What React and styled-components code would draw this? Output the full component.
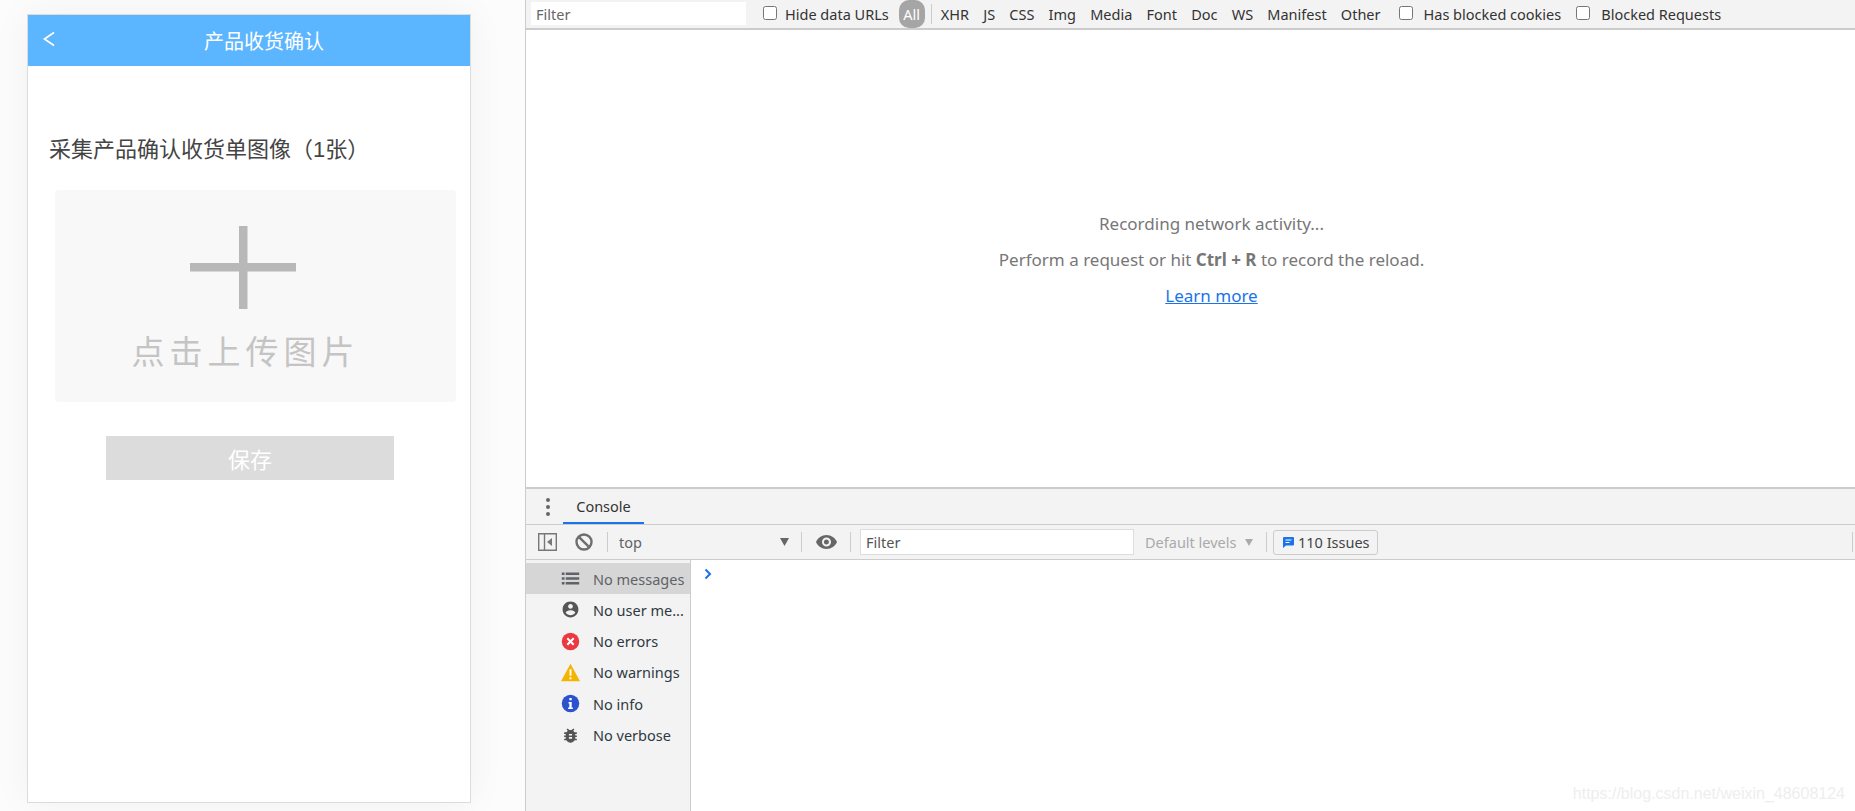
import styled, { createGlobalStyle } from "styled-components"

const GlobalStyle = createGlobalStyle`
  html, body {
    margin: 0;
    height: 100%;
    overflow: hidden;
    background: #fff;
  }
  * {
    box-sizing: border-box;
  }
`

const sans = `"Noto Sans", "Open Sans", "Noto Sans CJK SC", sans-serif`
const cjk = `"Liberation Sans", "Noto Sans CJK SC", sans-serif`

const Container = styled.div`
  height: 100vh;
  width: 100vw;
  display: flex;
  position: relative;
  overflow: hidden;
`

const PhonePane = styled.div`
  width: 525px;
  height: 100%;
  flex: none;
  padding: 14px 0 0 27px;
  background: #fcfcfc;
`

const Phone = styled.div`
  width: 444px;
  height: 789px;
  background: #fff;
  border: 1px solid #dcdcdc;
  box-shadow: 0 0 36px rgba(0, 0, 0, 0.05);
  display: flex;
  flex-direction: column;
  font-family: ${cjk};
`

const PhoneHeader = styled.div`
  height: 51px;
  flex: none;
  padding-left: 30px;
  background: #5cb6ff;
  color: #fff;
  font-size: 20px;
  display: flex;
  align-items: center;
  justify-content: center;
  position: relative;
`

const BackIcon = styled.svg`
  position: absolute;
  left: 15px;
  top: 16px;
  width: 12px;
  height: 16px;
`

const PageTitle = styled.div`
  margin: 69px 0 25px 21px;
  font-size: 22px;
  line-height: 30px;
  color: #444;
  white-space: nowrap;
`

const Upload = styled.div`
  width: 401px;
  height: 212px;
  margin-left: 27px;
  padding: 36px 26px 0 0;
  background: #f8f8f8;
  border-radius: 3px;
  display: flex;
  flex-direction: column;
  align-items: center;
`

const UploadText = styled.div`
  margin: 24px 0 0 6px;
  font-size: 33px;
  line-height: 40px;
  letter-spacing: 5px;
  color: #c4c4c4;
  white-space: nowrap;
`

const SaveButton = styled.div`
  width: 288px;
  height: 44px;
  margin: 34px 0 0 78px;
  background: #dcdcdc;
  color: #fff;
  font-size: 22px;
  display: flex;
  align-items: center;
  justify-content: center;
`

const DevTools = styled.div`
  flex: 1;
  min-width: 0;
  height: 100%;
  border-left: 1px solid #ccc;
  display: flex;
  flex-direction: column;
  font-family: ${sans};
  font-size: 14.5px;
  color: #333;
`

const NetworkBar = styled.div`
  height: 30px;
  flex: none;
  padding-left: 5px;
  background: #f3f3f3;
  border-bottom: 2px solid #ccc;
  display: flex;
  align-items: center;
  white-space: nowrap;
`

const BarFilter = styled.div`
  width: 215px;
  height: 23px;
  margin-top: -1px;
  padding-left: 5px;
  background: #fff;
  color: #666;
  line-height: 25px;
`

const Check = styled.label`
  display: flex;
  align-items: center;
  gap: ${p => p.$gap || 8}px;
  margin-left: ${p => p.$left}px;
`

const CheckBox = styled.input`
  width: 14px;
  height: 14px;
  margin: 0 0 3px;
`

const AllPill = styled.div`
  width: 26px;
  height: 28px;
  margin-left: 10px;
  border-radius: 10px;
  background: #a5a5a5;
  color: #fff;
  display: flex;
  align-items: center;
  justify-content: center;
`

const VRule = styled.div`
  width: 1px;
  height: ${p => p.$h || 20}px;
  flex: none;
  background: #ccc;
  margin-left: ${p => p.$left}px;
`

const Chips = styled.div`
  display: flex;
  gap: 14.2px;
  margin-left: 9px;
`

const Empty = styled.div`
  flex: 1;
  min-height: 0;
  background: #fff;
  display: flex;
  flex-direction: column;
  align-items: center;
  padding: 176px 0 0 42px;
  color: #777;
  font-size: 17px;
  line-height: 36px;
`

const Link = styled.a`
  color: #1a73e8;
  text-decoration: underline;
`

const DrawerTabs = styled.div`
  height: 38px;
  flex: none;
  background: #f3f3f3;
  border-top: 2px solid #ccc;
  border-bottom: 1px solid #ccc;
  display: flex;
  align-items: stretch;
  padding-left: 16px;
`

const Dots = styled.svg`
  width: 12px;
  height: 20px;
  align-self: center;
`

const Tab = styled.div`
  width: 81px;
  margin-left: 9px;
  border-bottom: 2px solid #1a73e8;
  display: flex;
  align-items: center;
  justify-content: center;
`

const ConsoleBar = styled.div`
  height: 35px;
  flex: none;
  background: #f3f3f3;
  border-bottom: 1px solid #ccc;
  display: flex;
  align-items: center;
  padding-left: 12px;
  position: relative;
`

const BarIcon = styled.svg`
  width: ${p => p.$w}px;
  height: ${p => p.$h}px;
  flex: none;
  margin-left: ${p => p.$left || 0}px;
`

const Context = styled.div`
  width: 161px;
  margin-left: 11px;
  color: #5f6368;
`

const ConsoleFilter = styled.div`
  width: 274px;
  height: 26px;
  margin-left: 9px;
  padding-left: 5px;
  background: #fff;
  border: 1px solid #ddd;
  color: #555;
  line-height: 25px;
`

const Levels = styled.div`
  margin-left: 11px;
  width: 93px;
  color: #aaa;
  white-space: nowrap;
`

const IssuesButton = styled.div`
  width: 105px;
  height: 25px;
  margin-left: 6px;
  border: 1px solid #ccc;
  border-radius: 3px;
  display: flex;
  align-items: center;
  gap: 4px;
  padding-left: 9px;
  color: #444;
  white-space: nowrap;
`

const ConsoleBody = styled.div`
  height: 251px;
  flex: none;
  display: flex;
`

const Sidebar = styled.div`
  width: 165px;
  flex: none;
  padding-top: 3px;
  background: #f3f3f3;
  border-right: 1px solid #ccc;
`

const SideRow = styled.div`
  height: ${p => (p.$selected ? 31 : 31.4)}px;
  display: flex;
  align-items: center;
  gap: 13px;
  padding-left: 35px;
  background: ${p => (p.$selected ? "#d6d6d6" : "transparent")};
  color: ${p => (p.$selected ? "#5f6368" : "#303942")};
  white-space: nowrap;
`

const SideIcon = styled.svg`
  width: 19px;
  height: 19px;
  flex: none;
`

const Prompt = styled.svg`
  width: 8px;
  height: 12px;
  margin: 8px 0 0 13px;
`

const Watermark = styled.div`
  position: absolute;
  right: 10px;
  bottom: 8px;
  font-family: "Liberation Sans", sans-serif;
  font-size: 16px;
  color: #eee;
`

const chips = ["XHR", "JS", "CSS", "Img", "Media", "Font", "Doc", "WS", "Manifest", "Other"]

const grey = "#5f6368"

const rows = [
  {
    label: "No messages",
    selected: true,
    icon: <path fill={grey} d="M1 4.500h3.500v3H1zM6 4.500h17v3H6zM1 10.500h3.500v3H1zM6 10.500h17v3H6zM1 16.500h3.500v3H1zM6 16.500h17v3H6z" />,
  },
  {
    label: "No user me...",
    icon: <path fill="#555" d="M12 2C6.48 2 2 6.48 2 12s4.48 10 10 10 10-4.48 10-10S17.52 2 12 2zm0 3c1.66 0 3 1.34 3 3s-1.34 3-3 3-3-1.34-3-3 1.34-3 3-3zm0 14.2c-2.5 0-4.71-1.28-6-3.22.03-1.99 4-3.08 6-3.08 1.99 0 5.97 1.09 6 3.08-1.29 1.94-3.5 3.22-6 3.22z" />,
  },
  {
    label: "No errors",
    icon: (
      <>
        <circle cx="12" cy="12" r="11" fill="#eb3941" />
        <path d="M8 8l8 8M16 8l-8 8" stroke="#fff" strokeWidth="2.6" />
      </>
    ),
  },
  {
    label: "No warnings",
    icon: (
      <>
        <path fill="#f4b400" d="M12 1L24 23H0z" />
        <path fill="#fff" d="M10.8 8h2.4v8h-2.4zM10.8 18h2.4v2.4h-2.4z" />
      </>
    ),
  },
  {
    label: "No info",
    icon: (
      <>
        <circle cx="12" cy="12" r="11" fill="#2a53cd" />
        <path fill="#fff" d="M10.5 5h3v3h-3zM9.5 10h4v7h1.5v2H9v-2h1.5v-5h-1z" />
      </>
    ),
  },
  {
    label: "No verbose",
    icon: <path fill="#555" d="M20 8h-2.81c-.45-.78-1.07-1.45-1.82-1.96L17 4.41 15.59 3l-2.17 2.17C12.96 5.06 12.49 5 12 5c-.49 0-.96.06-1.41.17L8.41 3 7 4.41l1.62 1.63C7.88 6.55 7.26 7.22 6.81 8H4v2h2.09c-.05.33-.09.66-.09 1v1H4v2h2v1c0 .34.04.67.09 1H4v2h2.81c1.04 1.79 2.97 3 5.19 3s4.15-1.21 5.19-3H20v-2h-2.09c.05-.33.09-.66.09-1v-1h2v-2h-2v-1c0-.34-.04-.67-.09-1H20V8zm-6 8h-4v-2h4v2zm0-4h-4v-2h4v2z" />,
  },
]

function App() {
  return (
    <Container>
      <GlobalStyle />
      <PhonePane>
        <Phone>
          <PhoneHeader>
            <BackIcon viewBox="0 0 12 16">
              <path d="M11 1.500L1.500 8l9.500 6.500" fill="none" stroke="#fff" strokeWidth="1.7" />
            </BackIcon>
            产品收货确认
          </PhoneHeader>
          <PageTitle>采集产品确认收货单图像（1张）</PageTitle>
          <Upload>
            <svg width="106" height="83" viewBox="0 0 106 83">
              <path fill="#b8b8b8" d="M49 0h8.500v37H106v8.500H57.500V83H49V45.500H0V37h49z" />
            </svg>
            <UploadText>点击上传图片</UploadText>
          </Upload>
          <SaveButton>保存</SaveButton>
        </Phone>
      </PhonePane>

      <DevTools>
        <NetworkBar>
          <BarFilter>Filter</BarFilter>
          <Check $left={17}>
            <CheckBox type="checkbox" readOnly />
            Hide data URLs
          </Check>
          <AllPill>All</AllPill>
          <VRule $left={6} />
          <Chips>
            {chips.map(c => <span key={c}>{c}</span>)}
          </Chips>
          <Check $left={18} $gap={11}>
            <CheckBox type="checkbox" readOnly />
            Has blocked cookies
          </Check>
          <Check $left={15} $gap={11}>
            <CheckBox type="checkbox" readOnly />
            Blocked Requests
          </Check>
        </NetworkBar>

        <Empty>
          <div>Recording network activity...</div>
          <div>Perform a request or hit <b>Ctrl + R</b> to record the reload.</div>
          <Link>Learn more</Link>
        </Empty>

        <DrawerTabs>
          <Dots viewBox="0 0 12 20">
            <circle cx="6" cy="3" r="2" fill="#666" />
            <circle cx="6" cy="10" r="2" fill="#666" />
            <circle cx="6" cy="17" r="2" fill="#666" />
          </Dots>
          <Tab>Console</Tab>
        </DrawerTabs>

        <ConsoleBar>
          <BarIcon $w={19} $h={18} viewBox="0 0 19 18">
            <path fill="none" stroke="#777" strokeWidth="1.4" d="M.7.7h17.6v16.6H.7zM6.500.7v16.6" />
            <path fill="#777" d="M14 5v8L9 9z" />
          </BarIcon>
          <BarIcon $w={18} $h={18} $left={18} viewBox="0 0 18 18">
            <circle cx="9" cy="9" r="7.500" fill="none" stroke="#6e6e6e" strokeWidth="2.4" />
            <path d="M3.800 3.800l10.400 10.400" stroke="#6e6e6e" strokeWidth="2.4" />
          </BarIcon>
          <VRule $left={14} />
          <Context>top</Context>
          <BarIcon $w={9} $h={8} viewBox="0 0 9 8">
            <path fill="#666" d="M0 0h9L4.500 8z" />
          </BarIcon>
          <VRule $left={12} />
          <BarIcon $w={21} $h={14} $left={14} viewBox="0 0 21 14">
            <path fill="#666" fillRule="evenodd" d="M10.500 0C5.700 0 1.700 2.900 0 7c1.700 4.100 5.700 7 10.500 7S19.300 11.100 21 7c-1.700-4.100-5.700-7-10.500-7zm0 11.500a4.500 4.500 0 1 1 0-9 4.500 4.500 0 0 1 0 9zm0-7a2.500 2.500 0 1 0 0 5 2.500 2.500 0 0 0 0-5z" />
          </BarIcon>
          <VRule $left={13} />
          <ConsoleFilter>Filter</ConsoleFilter>
          <Levels>Default levels</Levels>
          <BarIcon $w={8} $h={7} $left={7} viewBox="0 0 8 7">
            <path fill="#aaa" d="M0 0h8L4 7z" />
          </BarIcon>
          <VRule $left={13} />
          <IssuesButton>
            <BarIcon $w={11} $h={11} viewBox="0 0 11 11">
              <path fill="#1a73e8" d="M1 0h9a1 1 0 0 1 1 1v6.500a1 1 0 0 1-1 1H3L0 11V1a1 1 0 0 1 1-1z" />
              <path fill="#fff" d="M2.500 2.500h6v1h-6zM2.500 5h4v1h-4z" />
            </BarIcon>
            110 Issues
          </IssuesButton>
          <VRule $left={474} />
        </ConsoleBar>

        <ConsoleBody>
          <Sidebar>
            {rows.map(r => (
              <SideRow key={r.label} $selected={r.selected}>
                <SideIcon viewBox="0 0 24 24">{r.icon}</SideIcon>
                {r.label}
              </SideRow>
            ))}
          </Sidebar>
          <Prompt viewBox="0 0 8 12">
            <path d="M1.500 1.500L6 6l-4.500 4.500" fill="none" stroke="#1a73e8" strokeWidth="2" />
          </Prompt>
        </ConsoleBody>
      </DevTools>

      <Watermark>https://blog.csdn.net/weixin_48608124</Watermark>
    </Container>
  )
}

export default App
